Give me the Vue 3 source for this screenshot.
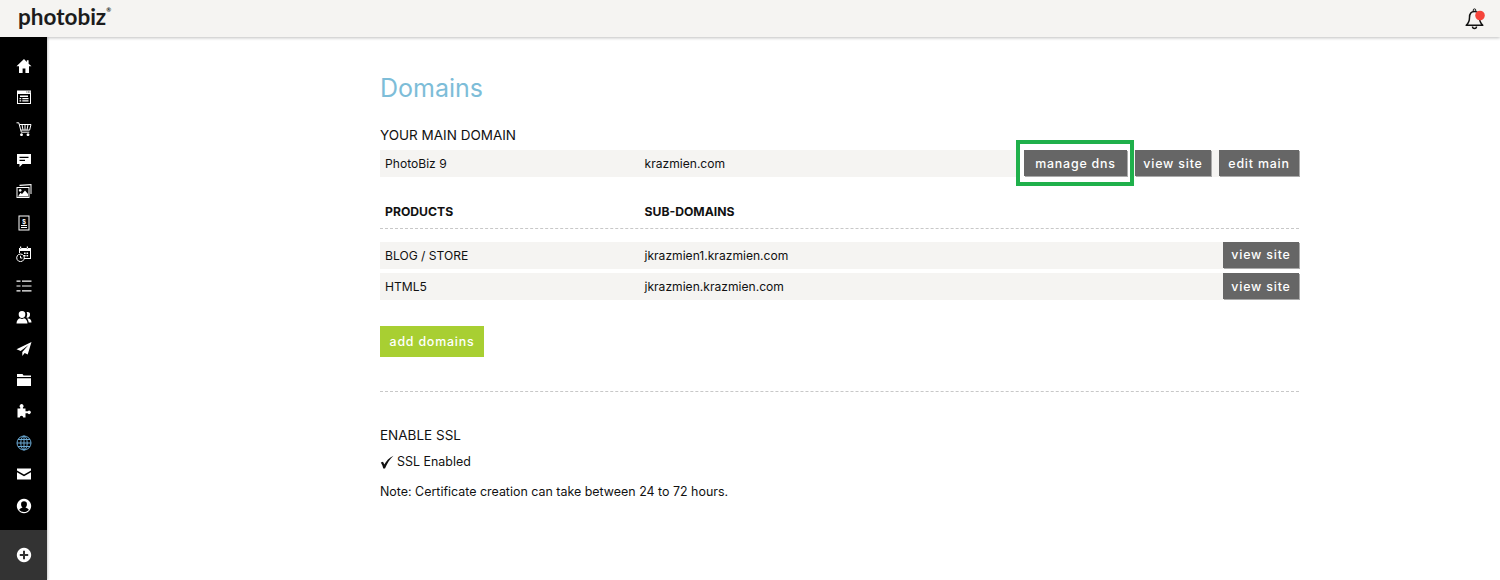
<script setup>
const navIcons = [
  { name: 'home', fill: 'M8 1 .5 8.200H3V15h3.600v-4.600h2.800V15H13V8.200h2.500L12.600 5.700V2.200h-1.800v1.800Z' },
  { name: 'pages', fill: 'M1 1.500h14V15H1ZM2 5v9h12V5ZM4 6.500h8V8H4ZM3.500 9h1.700v1.300H3.500ZM6.300 9h6.200v1.300H6.300ZM3.500 11.300h1.700v1.300H3.500ZM6.300 11.300h6.200v1.300H6.300Z', line: 'M10.500 3h.8M12 3h.8M13.500 3h.8', lineColor: '#000' },
  { name: 'cart', line: 'M.5 1.800h2.300l2.500 9.400h8M3.500 3.500h11.500l-1.400 5.600H5M6 3.500l1 5.600M9 3.500v5.600M12 3.500l-1 5.600', extra: 'M5.500 12.300a1.400 1.400 0 1 0 .01 0ZM12 12.300a1.400 1.400 0 1 0 .01 0Z' },
  { name: 'chat', fill: 'M1 2h14v10H6.500L3.500 15v-3H1ZM3.500 4.800v1.300h9V4.800ZM3.500 7.800v1.300h5.500V7.800Z' },
  { name: 'gallery', fill: 'M3.500 1.800 15.500 1v10h-1V2.200L3.500 2.900ZM.5 4h13v11H.5ZM1.500 5v9h11V5ZM4.200 6a1.400 1.400 0 1 0 .01 0ZM2 13.500h10V11L9 7.500 6 11 4.500 9.800Z' },
  { name: 'invoice', fill: 'M2.500 .5h11v15h-11ZM3.500 1.500v13h9v-13ZM5 10h6v1H5ZM5 12h6v1H5Z', text: '$' },
  { name: 'calendar', fill: 'M4 .5h1.200v2H4ZM10.800 .5H12v2h-1.200ZM3 2h12v11H8v-1h6V5H4v2H3ZM8 6.500h1.600V8H8ZM10.500 6.500h1.600V8h-1.600ZM8 9h1.600v1.500H8ZM10.500 9h1.600v1.500h-1.600Z', line: 'M4.500 8a3.800 3.800 0 1 0 .01 0M4.500 9.800v2.200h1.800' },
  { name: 'list', fill: 'M.5 2.500h4v1.200h-4ZM6 2.500h9.500v1.200H6ZM.5 7.400h4v1.200h-4ZM6 7.400h9.500v1.200H6ZM.5 12.300h4v1.200h-4ZM6 12.300h9.500v1.200H6Z' },
  { name: 'people', fill: 'M6 2a3.300 3.300 0 0 1 3.300 3.500c0 2-1.300 3.500-3.300 3.500S2.700 7.500 2.700 5.500A3.300 3.300 0 0 1 6 2ZM.5 14.500c0-3 1.700-4.800 3.500-5.200 1.200.8 2.800.8 4 0 1.800.4 3.500 2.200 3.500 5.200ZM11.500 3a2.500 2.500 0 0 1 2.500 2.800c0 1.700-1 2.900-2.500 2.900-.4 0-.8-.1-1.100-.3.500-.9.800-1.900.8-2.900 0-.9-.2-1.700-.6-2.300.3-.1.600-.2.900-.2ZM11 9.500c.6.200 1.300.1 1.900-.1 1.500.4 2.600 1.800 2.600 4.100h-2.800c-.2-1.700-.8-3-1.700-4Z' },
  { name: 'send', fill: 'M15.500 1 .5 8.200l4.200 1.900L12.500 4 6.300 11v4l2.400-3 3 1.500Z' },
  { name: 'folder', fill: 'M1 2h5.500l1 1.500H15V5H1ZM1 6.200h14V14H1Z' },
  { name: 'plugin', fill: 'M1.500 5.500H4.300V4.600A2 2 0 1 1 6.900 4.600V5.500H9.500V8.300H11.800A1.700 1.700 0 1 1 11.800 10.300H9.500V14.500H7.200A1.700 1.700 0 0 0 3.800 14.500H1.500Z' },
  { name: 'globe', globe: true },
  { name: 'mail', fill: 'M1 2.500h14v2L8 8.500 1 4.500ZM1 6.300l7 4 7-4v7.200H1Z' },
  { name: 'user', fill: 'M8 .8a7.200 7.200 0 1 1-.01 0ZM8 3.300a2.900 2.900 0 0 0-2.900 3.100c0 1.400.6 2.500 1.500 3-1.700.4-3.100 1.300-3.400 2.600A6.100 6.100 0 0 0 8 14.100c1.900 0 3.600-.8 4.800-2.100-.3-1.300-1.700-2.200-3.400-2.600.9-.5 1.500-1.600 1.500-3A2.900 2.900 0 0 0 8 3.300Z' },
]
const subdomains = [
  { product: 'BLOG / STORE', host: 'jkrazmien1.krazmien.com' },
  { product: 'HTML5', host: 'jkrazmien.krazmien.com' },
]
</script>

<template>
  <div class="page">
    <header class="topbar">
      <div class="logo">photobiz<sup>®</sup></div>
      <svg class="bell" viewBox="0 0 20 22" width="20" height="22">
        <path d="M9.500 3.500C6 3.500 4.500 6.200 4.500 9.500c0 3.500-1.200 6-3.300 7.800h16.600c-2.100-1.800-3.300-4.300-3.300-7.800 0-3.300-1.500-6-5-6Z" fill="none" stroke="#111" stroke-width="1.500" stroke-linejoin="round" />
        <circle cx="9.500" cy="2.200" r="1.300" fill="none" stroke="#111" stroke-width="1" />
        <path d="M7.500 18.500a2 2 0 0 0 4 0" fill="none" stroke="#111" stroke-width="1.400" />
        <circle cx="15" cy="7.500" r="4.800" fill="#f5443b" />
      </svg>
    </header>

    <div class="body">
      <nav class="sidebar">
        <ul class="nav">
          <li v-for="icon in navIcons" :key="icon.name" class="nav-item">
            <svg viewBox="0 0 16 16" width="16" height="16" fill="none">
              <path v-if="icon.fill" :d="icon.fill" fill="#fff" fill-rule="evenodd" />
              <path v-if="icon.line" :d="icon.line" :stroke="icon.lineColor || '#fff'" stroke-width="1" />
              <path v-if="icon.extra" :d="icon.extra" fill="#fff" />
              <text v-if="icon.text" x="8" y="8.800" text-anchor="middle" class="dollar">{{ icon.text }}</text>
              <g v-if="icon.globe" stroke="#6aa8d2" stroke-width="1">
                <circle cx="8" cy="8" r="7" />
                <ellipse cx="8" cy="8" rx="3.200" ry="7" />
                <path d="M8 1v14M1 8h14M2 4.500h12M2 11.500h12" />
              </g>
            </svg>
          </li>
        </ul>
        <div class="add-box">
          <svg viewBox="0 0 16 16" width="16" height="16">
            <path d="M8 .8a7.200 7.200 0 1 1-.01 0ZM7 3.800v3.200H3.800v2H7v3.200h2V9h3.200V7H9V3.800Z" fill="#fff" fill-rule="evenodd" />
          </svg>
        </div>
      </nav>

      <main class="main">
        <div class="content">
          <h1 class="title">Domains</h1>

          <h2 class="section-title">YOUR MAIN DOMAIN</h2>
          <div class="row row-main">
            <span class="col-product">PhotoBiz 9</span>
            <span class="col-host">krazmien.com</span>
            <span class="actions">
              <span class="highlighted">
                <span class="highlight-box"></span>
                <button class="btn btn-manage">manage dns</button>
              </span>
              <button class="btn btn-view">view site</button>
              <button class="btn btn-edit">edit main</button>
            </span>
          </div>

          <div class="table-head">
            <span class="col-product">PRODUCTS</span>
            <span class="col-host">SUB-DOMAINS</span>
          </div>

          <div class="sub-rows">
            <div v-for="s in subdomains" :key="s.product" class="row">
              <span class="col-product">{{ s.product }}</span>
              <span class="col-host">{{ s.host }}</span>
              <span class="actions"><button class="btn btn-view">view site</button></span>
            </div>
          </div>

          <button class="btn btn-add">add domains</button>

          <div class="divider"></div>

          <h2 class="section-title ssl-title">ENABLE SSL</h2>
          <p class="ssl-status">
            <svg viewBox="0 0 14 14" width="14" height="14"><path d="M.8 7.500 3 6.700c.6 1 1 1.800 1.300 2.800C6.300 6 9 3 13.500 .8 9.700 4.500 7 8.500 5 13.500H3.300C2.800 11.200 2 9.200 .8 7.500Z" fill="#111" /></svg>
            SSL Enabled
          </p>
          <p class="note">Note: Certificate creation can take between 24 to 72 hours.</p>
        </div>
      </main>
    </div>
  </div>
</template>

<style>
html, body { margin: 0; background: #fff; }
</style>

<style scoped>
.page {
  width: 1500px;
  height: 580px;
  overflow: hidden;
  display: flex;
  flex-direction: column;
  font-family: "Inter", "Liberation Sans", sans-serif;
  color: #111;
}
.topbar {
  height: 37px;
  flex: none;
  background: #f5f4f2;
  box-shadow: 0 1px 3px rgba(0, 0, 0, .25);
  display: flex;
  align-items: center;
  justify-content: space-between;
  padding: 0 15px 0 18px;
  position: relative;
  z-index: 2;
}
.logo {
  font-family: "Lato", sans-serif;
  font-weight: 700;
  font-size: 22.500px;
  line-height: 30px;
  color: #1c1c1c;
  margin-top: -3px;
}
.logo sup {
  font-size: 6px;
  vertical-align: 13px;
  line-height: 0;
}
.bell { display: block; margin-top: 1px; }
.body { flex: 1; display: flex; min-height: 0; }
.sidebar {
  width: 47px;
  flex: none;
  background: #000;
  display: flex;
  flex-direction: column;
  box-shadow: 1px 0 2px rgba(0, 0, 0, .2);
}
.nav {
  list-style: none;
  margin: 0;
  padding: 13px 0 0;
  flex: 1;
}
.nav-item {
  height: 31.430px;
  display: flex;
  align-items: center;
  justify-content: center;
}
.dollar { font: 700 6.500px "Liberation Sans", sans-serif; fill: #fff; }
.add-box {
  height: 50px;
  background: #333;
  display: flex;
  align-items: center;
  justify-content: center;
}
.main { flex: 1; padding-left: 333px; }
.content { width: 919px; font-size: 12.450px; }
.title {
  margin: 35px 0 0;
  font-size: 25px;
  line-height: 32px;
  font-weight: 400;
  color: #7dbdd8;
}
.section-title {
  margin: 21px 0 0;
  font-size: 13.500px;
  line-height: 20px;
  font-weight: 400;
}
.row {
  height: 27px;
  background: #f5f4f2;
  display: flex;
  align-items: center;
  padding-left: 5px;
  font-size: 12.100px;
}
.row-main { margin-top: 5px; }
.col-product { width: 259.500px; flex: none; }
.col-host { flex: 1; }
.actions { display: flex; gap: 8px; align-items: center; align-self: flex-start; }
.btn {
  height: 26px;
  padding: 0;
  border: 0;
  background: #666;
  color: #fff;
  font: 500 12.400px "Inter", "Liberation Sans", sans-serif;
  letter-spacing: .8px;
  text-align: center;
  box-shadow: 1px 1px 0 #aaa;
  white-space: nowrap;
}
.btn-manage { width: 103px; }
.btn-view { width: 76px; }
.btn-edit { width: 80px; }
.highlighted { position: relative; display: block; }
.highlighted .btn { position: relative; display: block; }
.highlight-box {
  position: absolute;
  inset: -10px -7px -10px -8px;
  background: #fff;
  border: 4px solid #1fb04b;
}
.table-head {
  display: flex;
  padding-left: 5px;
  margin-top: 25px;
  height: 26px;
  line-height: 20px;
  font-weight: 700;
  font-size: 12.200px;
  border-bottom: 1px dashed #c8c8c8;
}
.sub-rows {
  margin-top: 12.500px;
  display: flex;
  flex-direction: column;
  gap: 4.500px;
}
.btn-add {
  display: block;
  margin-top: 25.500px;
  height: 31px;
  width: 104px;
  background: #a8cf32;
  box-shadow: none;
}
.divider { margin-top: 34px; border-top: 1px dashed #c8c8c8; }
.ssl-title { margin-top: 33px; }
.ssl-status {
  margin: 7px 0 0;
  line-height: 20px;
  display: flex;
  align-items: center;
  gap: 3px;
}
.note { margin: 10px 0 0; line-height: 20px; }
</style>
